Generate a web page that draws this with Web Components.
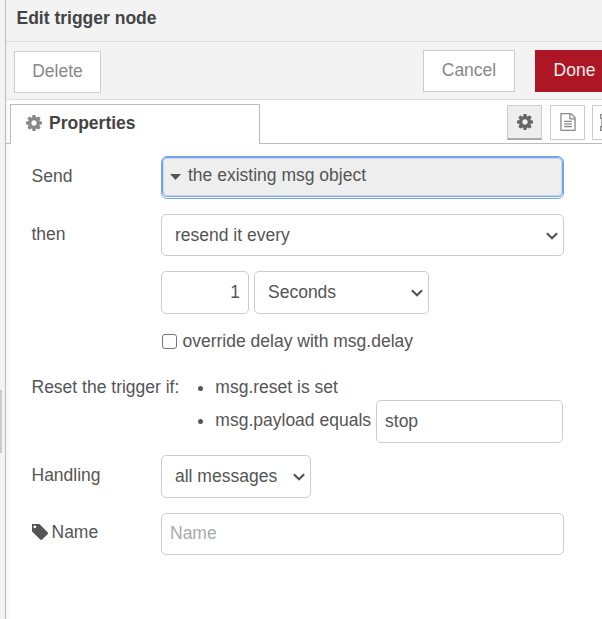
<!DOCTYPE html>
<html lang="en">
<head>
<meta charset="utf-8">
<title>Edit trigger node</title>
<style>
html,body{margin:0;height:100%;overflow:hidden;background:#fff}
body{font:17.5px/25px "Liberation Sans",Arial,sans-serif;color:#555}
</style>
</head>
<body>
<node-editor></node-editor>
<script>
const ICONS = {
  cog: ['0 128 1536 1536', 'M1024 896q0-106-75-181t-181-75-181 75-75 181 75 181 181 75 181-75 75-181zm512-109v222q0 12-8 23t-20 13l-185 28q-19 54-39 91 35 50 107 138 10 12 10 25t-9 23q-27 37-99 108t-94 71q-12 0-26-9l-138-108q-44 23-91 38-16 136-29 186-7 28-36 28h-222q-14 0-24.5-8.500t-11.500-21.500l-28-184q-49-16-90-37l-141 107q-10 9-25 9-14 0-25-11-126-114-165-168-7-10-7-23 0-12 8-23 15-21 51-66.500t54-70.500q-27-50-41-99l-183-27q-13-2-21-12.500t-8-23.500v-222q0-12 8-23t19-13l186-28q14-46 39-92-40-57-107-138-10-12-10-24 0-10 9-23 26-36 98.500-107.500t94.500-71.500q13 0 26 10l138 107q44-23 91-38 16-136 29-186 7-28 36-28h222q14 0 24.500 8.500t11.500 21.500l28 184q49 16 90 37l142-107q9-9 24-9 13 0 25 10 129 119 165 170 7 8 7 22 0 12-8 23-15 21-51 66.500t-54 70.500q26 50 41 98l183 28q13 2 21 12.500t8 23.500z'],
  tag: ['0 192 1451 1451', 'M384 448q0-53-37.500-90.500t-90.500-37.500-90.500 37.500-37.500 90.500 37.500 90.500 90.500 37.500 90.500-37.500 37.500-90.500zm1067 576q0 53-37 90l-491 492q-39 37-91 37-53 0-90-37l-715-716q-38-37-64.500-101t-26.500-117v-416q0-52 38-90t90-38h416q53 0 117 26.500t102 64.500l715 714q37 39 37 91z'],
  doc: ['0 0 1536 1792', 'M1468 380q28 28 48 76t20 88v1152q0 40-28 68t-68 28h-1344q-40 0-68-28t-28-68v-1600q0-40 28-68t68-28h896q40 0 88 20t76 48zm-444-244v376h376q-10-29-22-41l-313-313q-12-12-41-22zm384 1528v-1024h-416q-40 0-68-28t-28-68v-416h-768v1536h1280zm-1024-864q0-14 9-23t23-9h704q14 0 23 9t9 23v64q0 14-9 23t-23 9h-704q-14 0-23-9t-9-23v-64zm736 224q14 0 23 9t9 23v64q0 14-9 23t-23 9h-704q-14 0-23-9t-9-23v-64q0-14 9-23t23-9h704zm0 256q14 0 23 9t9 23v64q0 14-9 23t-23 9h-704q-14 0-23-9t-9-23v-64q0-14 9-23t23-9h704z'],
  group: ['0 0 20 17', 'M0 0h5v1.300h10V0h5v5h-1.300v7H20v5h-5v-1.300H5V17H0v-5h1.300V5H0zM1.300 1.300v2.400h2.400V1.300zM16.300 1.300v2.400h2.400V1.300zM5 2.600V5H2.600v7H5v2.400h10V12h2.400V5H15V2.600zM1.300 13.300v2.400h2.400v-2.400zM16.300 13.300v2.400h2.400v-2.400z'],
  chevron: ['0 0 12 8', 'M1.600.5 6 4.800 10.400.5 11.900 2 6 7.800.100 2z'],
  caret: ['0 0 11 6', 'M0 0H11L5.500 6Z']
};
const define = (name, html, init) => {
  const t = document.createElement('template');
  t.innerHTML = html;
  customElements.define(name, class extends HTMLElement {
    constructor() {
      super();
      this.attachShadow({mode: 'open'}).append(t.content.cloneNode(true));
    }
    connectedCallback() { if (init) init(this, this.shadowRoot); }
  });
};

define('ui-icon', `<style>:host{display:block;flex:none}svg{display:block;width:100%;height:100%;fill:currentColor}</style><svg><path fill-rule="evenodd"/></svg>`, (el, root) => {
  const [box, d] = ICONS[el.getAttribute('name')];
  root.querySelector('svg').setAttribute('viewBox', box);
  root.querySelector('path').setAttribute('d', d);
});

define('ui-button', `<style>
:host{display:flex;box-sizing:border-box;height:42px;border:1px solid #ccc;background:#fff;color:#888;justify-content:center;line-height:38px;white-space:nowrap}
:host([primary]){background:#ad1625;border-color:#ad1625;color:#eee}
</style><slot></slot>`);

define('tab-button', `<style>
:host{display:flex;box-sizing:border-box;flex:none;width:35px;height:35px;border:1px solid #ccc;background:#fff;color:#888;align-items:center;justify-content:center}
:host([active]){background:#eee;border-bottom:2px solid #aaa;color:#666}
</style><slot></slot>`);

define('form-row', `<style>
:host{display:grid;grid-template-columns:129.500px 1fr;align-items:start}
.label{display:flex;gap:4px;padding-top:8px;white-space:nowrap}
.field{display:flex;gap:5px}
</style><div class="label"><slot name="label"></slot></div><div class="field"><slot></slot></div>`);

define('ui-field', `<style>
:host{display:flex;box-sizing:border-box;flex:none;width:403px;height:43px;border:1px solid #ccc;border-radius:5px;background:#fff;padding:0 8px;line-height:40px;white-space:nowrap}
:host([placeholder]){color:#aaa;line-height:38px}
:host([number]){justify-content:flex-end}
</style><slot></slot>`);

define('ui-select', `<style>
:host{display:flex;box-sizing:border-box;flex:none;width:403px;height:43px;border:1px solid #ccc;border-radius:5px;background:#fff;padding:0 5px 0 13px;line-height:41px;justify-content:space-between;align-items:center;white-space:nowrap}
ui-icon{width:12px;height:8px;margin-top:1px}
</style><slot></slot><ui-icon name="chevron"></ui-icon>`);

define('typed-input', `<style>
:host{display:block;box-sizing:border-box;width:403px;height:43px;border:1px solid #72a5ea;border-radius:6px;background:#fff;padding:0 0 1px}
.inner{display:flex;box-sizing:border-box;height:40px;border:1px solid #72a5ea;border-radius:5px;background:#eee;gap:8px;padding-left:7px;line-height:34px;box-shadow:inset 0 0 0 1px #ccd8ea}
ui-icon{width:11px;height:6px;margin:16px -.5px 0 -.5px}
</style><div class="inner"><ui-icon name="caret"></ui-icon><slot></slot></div>`);

define('editor-tray', `<style>
:host{display:flex;flex-direction:column;flex:1;min-width:0;border-left:1px solid #bbb;background:linear-gradient(90deg,#f7f7f7,#fff 6px)}
header{box-sizing:border-box;height:42px;flex:none;padding:6px 11px 0 10.500px;background:#f3f3f3;border-bottom:1px solid #ddd;font-weight:bold;color:#444;white-space:nowrap}
.toolbar{display:flex;box-sizing:border-box;height:58px;flex:none;background:#f3f3f3;border-bottom:1px solid #ddd;padding:8px 0 0 8px;align-items:flex-start}
.toolbar>:first-child{width:87px;margin-top:1px;margin-right:auto}
.cancel{width:92px;margin-right:20px}
.done{width:79px;flex:none;margin-right:-12px}
.tabs{display:flex;height:44px;flex:none;align-items:flex-end}
.edge{width:4px;border-bottom:1px solid #bbb;flex:none}
.tab{display:flex;box-sizing:border-box;width:250px;height:40px;flex:none;border:1px solid #bbb;border-bottom:0;background:#fff;padding:6px 0 0 15px;gap:7px;font-weight:bold;color:#444}
.tab ui-icon{width:16px;height:16px;color:#888;margin-top:4px}
.rest{display:flex;box-sizing:border-box;height:39px;flex:1;min-width:0;border-bottom:1px solid #bbb;padding-left:247px;gap:8px;align-items:flex-start}
.rest>:last-child{margin-left:-1px}
.cog{width:16px;height:16px}.doc{width:16px;height:18px;margin-top:-2px}.grp{width:20px;height:17px}
</style>
<header>Edit trigger node</header>
<div class="toolbar"><ui-button>Delete</ui-button><ui-button class="cancel">Cancel</ui-button><ui-button class="done" primary>Done</ui-button></div>
<div class="tabs"><div class="edge"></div><div class="tab"><ui-icon name="cog"></ui-icon><span>Properties</span></div>
<div class="rest"><tab-button active><ui-icon class="cog" name="cog"></ui-icon></tab-button><tab-button><ui-icon class="doc" name="doc"></ui-icon></tab-button><tab-button><ui-icon class="grp" name="group"></ui-icon></tab-button></div></div>
<slot></slot>`);

define('reset-list', `<style>
:host{display:flex;flex-direction:column;margin-left:18.500px}
div{display:flex;height:25px;white-space:nowrap}
div+div{height:43px;gap:5px}
div::before{content:"";width:5px;height:5px;border-radius:50%;background:#555;margin:11px 12.500px 0 0;flex:none}
div+div::before{margin-top:19px;margin-right:7.500px}
div+div>span{padding-top:8px}
ui-field{width:187px}
</style><div><span>msg.reset is set</span></div><div><span>msg.payload equals</span><ui-field>stop</ui-field></div>`);

define('ui-check', `<style>
:host{display:flex;gap:6px;white-space:nowrap}
i{box-sizing:border-box;width:15px;height:15px;border:1.500px solid #767676;border-radius:3px;margin:5px 0 0 1px}
</style><i></i><slot></slot>`);

define('node-editor', `<style>
:host{display:flex;height:619px;width:602px;overflow:hidden;background:#f3f3f3}
.gutter{display:flex;width:5px;flex:none;align-items:flex-start}
.thumb{width:2px;height:63px;background:#ccc;margin-top:390px}
.form{padding:12px 0 0 25.500px;display:flex;flex-direction:column}
form-row{margin-bottom:15px}
ui-check{margin:0 0 20px 129px}
.reset{display:flex;margin:1px 0 12px}
.tag{width:16px;height:16px;margin-top:4px}
.short{height:42px}
</style>
<div class="gutter"><div class="thumb"></div></div>
<editor-tray><div class="form">
<form-row><span slot="label">Send</span><typed-input>the existing msg object</typed-input></form-row>
<form-row><span slot="label">then</span><ui-select class="short">resend it every</ui-select></form-row>
<form-row><ui-field number style="width:88px">1</ui-field><ui-select style="width:175px">Seconds</ui-select></form-row>
<ui-check>override delay with msg.delay</ui-check>
<div class="reset"><span>Reset the trigger if:</span><reset-list></reset-list></div>
<form-row><span slot="label">Handling</span><ui-select style="width:150px">all messages</ui-select></form-row>
<form-row><span slot="label" style="display:flex;gap:4px;margin-top:-1px"><ui-icon class="tag" name="tag"></ui-icon>Name</span><ui-field class="short" placeholder>Name</ui-field></form-row>
</div></editor-tray>
`);
</script>
</body>
</html>
